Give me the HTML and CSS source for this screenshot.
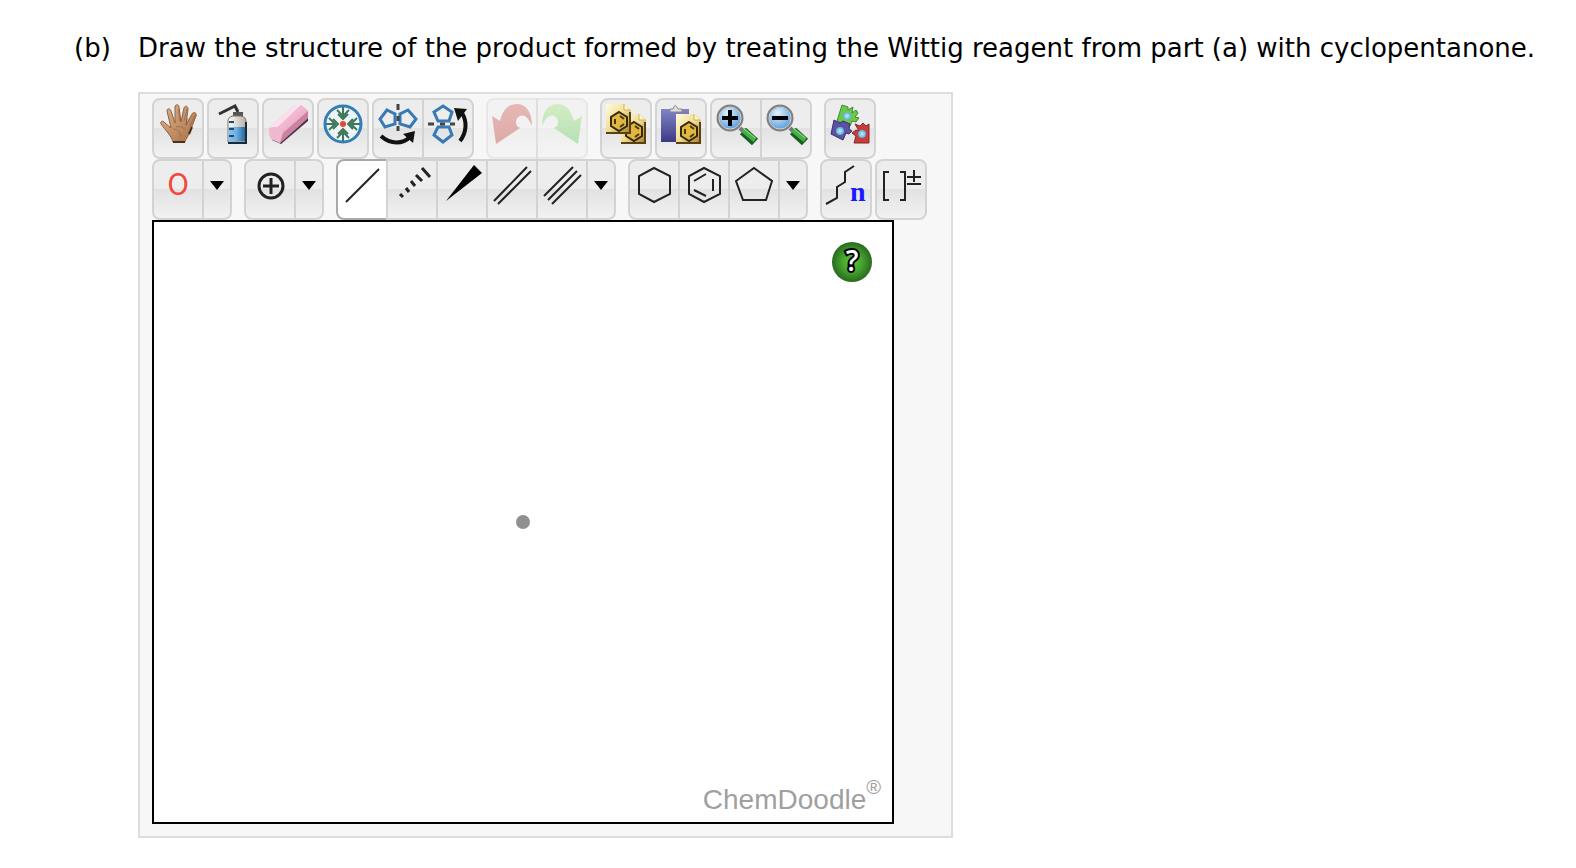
FILE: index.html
```
<!DOCTYPE html>
<html lang="en">
<head>
  <meta charset="UTF-8">
  <title>Wittig reaction - part (b)</title>
  <link rel="stylesheet" href="styles.css">
</head>

<body>
  <!-- icons that are used more than once -->
  <svg class="defs" aria-hidden="true">
    <defs>
      <linearGradient id="skin" x1="0" y1="0" x2="1" y2="1"><stop offset="0" stop-color="#dfb48c"/><stop offset="1" stop-color="#a96f45"/></linearGradient>
      <linearGradient id="liquid" x1="0" y1="0" x2="1" y2="0"><stop offset="0" stop-color="#8fc4ea"/><stop offset="0.45" stop-color="#6cb2e6"/><stop offset="1" stop-color="#245f96"/></linearGradient>
      <linearGradient id="plastic" x1="0" y1="0" x2="1" y2="0"><stop offset="0" stop-color="#fffdf8"/><stop offset="1" stop-color="#b8b0a8"/></linearGradient>
      <linearGradient id="pink" x1="0" y1="0" x2="1" y2="1"><stop offset="0" stop-color="#fbd0e2"/><stop offset="1" stop-color="#e69abb"/></linearGradient>
      <linearGradient id="red" x1="0" y1="0" x2="0" y2="1"><stop offset="0" stop-color="#cf5a50"/><stop offset="1" stop-color="#b83b32"/></linearGradient>
      <linearGradient id="green" x1="0" y1="0" x2="0" y2="1"><stop offset="0" stop-color="#a0e078"/><stop offset="1" stop-color="#55c055"/></linearGradient>
      <linearGradient id="paper" x1="0" y1="0" x2="1" y2="1"><stop offset="0" stop-color="#fffbe0"/><stop offset="0.5" stop-color="#f0dc90"/><stop offset="1" stop-color="#a07820"/></linearGradient>
      <linearGradient id="board" x1="0" y1="0" x2="0" y2="1"><stop offset="0" stop-color="#8384c6"/><stop offset="1" stop-color="#3c3a86"/></linearGradient>
      <radialGradient id="lens" cx="0.4" cy="0.3" r="0.8"><stop offset="0" stop-color="#e4f2fc"/><stop offset="1" stop-color="#3f92dc"/></radialGradient>
      <radialGradient id="atom"><stop offset="0" stop-color="#c8eefa"/><stop offset="1" stop-color="#5aaed8"/></radialGradient>
      <radialGradient id="help"><stop offset="0" stop-color="#5ccb3a"/><stop offset="0.5" stop-color="#46a42e"/><stop offset="1" stop-color="#286a1e"/></radialGradient>
      <g id="page">
        <path d="M0 0h19l6 6v24H0z" fill="url(#paper)"/>
        <path d="M0 29h24V8" fill="none" stroke="#5a410f" stroke-width="2"/>
        <path d="M18 0v6h6" fill="#fff6cc" stroke="#c9b26c"/>
        <path d="M13 8l8 5v9l-8 5-8-5v-9z" fill="#e0b83f" stroke="#332810" stroke-width="2"/>
        <path d="M9 15v5M14 12l4 3M14 23l4-3" fill="none" stroke="#4a3510" stroke-width="2"/>
      </g>
      <g id="glass">
        <path d="M24 24l4 4" stroke="#777" stroke-width="4"/>
        <path d="M27 27l12 11" stroke="#1b5c20" stroke-width="9"/>
        <path d="M27 26l12 10" stroke="#48ae48" stroke-width="5"/>
        <path d="M28 25l11 9" stroke="#97dd91"/>
        <circle cx="14" cy="14" r="12" fill="url(#lens)" stroke="#808080" stroke-width="3"/>
        <circle cx="14" cy="14" r="11" fill="none" stroke="#c5d6e4"/>
      </g>
      <g id="inward">
        <path d="M20 3v10M14 6l6 6 6-6M15 10l5 5 5-5" fill="none" stroke="#3f785a" stroke-width="2"/>
      </g>
    </defs>
  </svg>

  <main class="question">
    <span class="part">(b)</span>
    <div class="content">
      <p class="prompt">Draw the structure of the product formed by treating the Wittig reagent from part (a) with cyclopentanone.</p>

      <div class="sketcher">
        <!-- Editing tools -->
        <div class="toolbar">
          <div class="tools">
            <button class="tool" aria-label="Move"><svg viewBox="0 0 40 40">
              <path d="M15 38C13 31 8 27 3 20c-1-3 2-4 4-1l6 5L9 7c0-3 3-3 4 0l4 12V3c0-3 4-3 4 0l2 15 3-14c1-3 4-2 4 1l-2 16 6-11c2-3 5-1 4 2l-5 13c-2 7-5 9-6 13z" fill="url(#skin)" stroke="#8d6242"/>
              <path d="M15 25c5 0 7 3 8 8M18 23c5-1 7 0 9 3M28 21l2-7M32 22l5-11M20 5l2 12M29 5l-3 12" fill="none" stroke="#805636" opacity="0.5"/>
              <path d="M15 38h12M31 30l3-7" stroke="#4c301c" stroke-width="2"/>
            </svg></button>
            <button class="tool" aria-label="Clear"><svg viewBox="0 0 40 40">
              <path d="M6 10L22 2l3 6" fill="none" stroke="#333" stroke-width="3"/>
              <path d="M20 8h10v4H20z" fill="#555"/>
              <path d="M15 38V17q0-4 5-5h8q5 1 5 5v21z" fill="url(#plastic)" stroke="#77706a"/>
              <path d="M15 23h18v14H15z" fill="url(#liquid)"/>
              <path d="M15 39h18V18" fill="none" stroke="#152c40" stroke-width="2"/>
              <path d="M16 18h5M16 25h5M16 32h5" stroke="#284861" stroke-width="2"/>
            </svg></button>
            <button class="tool" aria-label="Erase"><svg viewBox="0 0 40 40">
              <path d="M4 36l9 4L40 17V9z" fill="#493542"/>
              <path d="M1 24L27 1h6l7 6v7L12 39l-9-4-2-6z" fill="#e9a3c3"/>
              <path d="M1 24L27 1h6L10 23z" fill="#fce1ec"/>
              <path d="M10 23L33 1l7 6-25 22z" fill="url(#pink)"/>
              <path d="M1 24l9-1 5 6-3 10-9-4-2-6z" fill="#f1b9d1"/>
              <path d="M15 29l25-22v7L12 39z" fill="#cc80a2"/>
            </svg></button>
            <button class="tool" aria-label="Center"><svg viewBox="0 0 40 40">
              <circle cx="20" cy="20" r="18" fill="#eef5f8" stroke="#347eb6" stroke-width="3"/>
              <use href="#inward"/>
              <use href="#inward" transform="rotate(90 20 20)"/>
              <use href="#inward" transform="rotate(180 20 20)"/>
              <use href="#inward" transform="rotate(270 20 20)"/>
              <circle cx="20" cy="20" r="3" fill="#e8443a"/>
            </svg></button>
            <div class="group">
              <button class="tool" aria-label="Flip horizontally"><svg viewBox="0 0 40 40">
                <path d="M9 6l8 4v10L7 23l-5-8zM30 6l-8 4v10l10 3 6-8z" fill="none" stroke="#377ab5" stroke-width="3"/>
                <path d="M20 0v6M20 12v5M20 22v5" stroke="#444" stroke-width="3"/>
                <path d="M3 32c10 9 22 8 29 1" fill="none" stroke="#111" stroke-width="4"/>
                <path d="M37 27l-2 12-10-9z" fill="#111"/>
              </svg></button>
              <button class="tool" aria-label="Flip vertically"><svg viewBox="0 0 40 40">
                <path d="M15 2l9 6-3 9H10L6 8zM10 23h11l3 8-9 7-9-7z" fill="none" stroke="#377ab5" stroke-width="3"/>
                <path d="M0 20h6M12 20h5M22 20h5" stroke="#444" stroke-width="3"/>
                <path d="M32 37c7-9 7-20 2-28" fill="none" stroke="#111" stroke-width="4"/>
                <path d="M26 4l13 1-9 12z" fill="#111"/>
              </svg></button>
            </div>
          </div>
          <div class="group">
            <button class="tool" aria-label="Undo" disabled><svg viewBox="0 0 40 40">
              <path d="M0 12l8 5C11 5 17 0 25 0c9 0 15 8 15 22-3-7-7-12-12-10-4 2-5 6-3 10l3 2L4 40z" fill="url(#red)"/>
            </svg></button>
            <button class="tool" aria-label="Redo" disabled><svg viewBox="0 0 40 40">
              <path d="M40 12l-8 5C29 5 23 0 15 0 6 0 0 8 0 22c3-7 7-12 12-10 4 2 5 6 3 10l-3 2 24 16z" fill="url(#green)"/>
            </svg></button>
          </div>
          <div class="tools">
            <button class="tool" aria-label="Copy"><svg viewBox="0 0 40 40">
              <use href="#page" x="15" y="10"/>
              <use href="#page"/>
            </svg></button>
            <button class="tool" aria-label="Paste"><svg viewBox="0 0 40 40">
              <path d="M0 5h28v33H0z" fill="url(#board)"/>
              <path d="M9 8V5h3q2-7 5 0h4v3z" fill="#ddd" stroke="#888"/>
              <use href="#page" x="15" y="10"/>
            </svg></button>
            <div class="group">
              <button class="tool" aria-label="Zoom in"><svg viewBox="0 0 40 40">
                <use href="#glass"/>
                <path d="M14 6v16M6 14h16" stroke="#000" stroke-width="4"/>
              </svg></button>
              <button class="tool" aria-label="Zoom out"><svg viewBox="0 0 40 40">
                <use href="#glass"/>
                <path d="M6 14h16" stroke="#000" stroke-width="4"/>
              </svg></button>
            </div>
          </div>
          <button class="tool" aria-label="Templates"><svg viewBox="0 0 40 40">
            <path d="M12 1l6 2v3l5-3-1 6 4-3 2 3-3 4 4 1-3 4-4-1-2 5-7-2-6-3z" fill="#6ac84a" stroke="#3f8a34"/>
            <path d="M4 16l6 3 3-2 7 3-1 5 3 2-3 3-3-1-3 7-12-6z" fill="#5c52a4" stroke="#383070"/>
            <path d="M25 20l5 2 3-3 3 3 3-2v19H24l2-7-4-3 4-3 3 1z" fill="#c53d3c" stroke="#8a2625"/>
            <circle cx="17" cy="12" r="4" fill="url(#atom)"/>
            <circle cx="10" cy="27" r="4" fill="url(#atom)"/>
            <circle cx="32" cy="30" r="4" fill="url(#atom)"/>
          </svg></button>
        </div>

        <!-- Drawing tools -->
        <div class="toolbar">
          <div class="group">
            <button class="tool atom" aria-label="Oxygen">O</button>
            <button class="tool menu" aria-label="More elements"></button>
          </div>
          <div class="group">
            <button class="tool" aria-label="Increase charge"><svg class="line thick" viewBox="0 0 40 40">
              <circle cx="21" cy="21" r="12"/><path d="M21 13v16M13 21h16"/>
            </svg></button>
            <button class="tool menu" aria-label="More attributes"></button>
          </div>
          <div class="group">
            <button class="tool selected" aria-label="Single bond"><svg class="line" viewBox="0 0 40 40"><path d="M4 37L37 4"/></svg></button>
            <button class="tool" aria-label="Recessed bond"><svg class="line thick" viewBox="0 0 40 40"><path d="M30 3l8 9M24 10l6 6M19 16l4 5M14 23l3 4M8 29l3 3"/></svg></button>
            <button class="tool" aria-label="Protruding bond"><svg viewBox="0 0 40 40"><path d="M4 36L32 0l8 8z"/></svg></button>
            <button class="tool" aria-label="Double bond"><svg class="line" viewBox="0 0 40 40"><path d="M2 36L35 2M6 39L39 6"/></svg></button>
            <button class="tool" aria-label="Triple bond"><svg class="line" viewBox="0 0 40 40"><path d="M2 31L31 2M6 35L35 6M10 39l29-29"/></svg></button>
            <button class="tool menu" aria-label="More bonds"></button>
          </div>
          <div class="group">
            <button class="tool" aria-label="Cyclohexane ring"><svg class="line" viewBox="0 0 40 40"><path d="M20 3l16 8v18l-16 8-15-8V11z"/></svg></button>
            <button class="tool" aria-label="Benzene ring"><svg class="line" viewBox="0 0 40 40"><path d="M20 3l16 8v18l-16 8-15-8V11zM10 16l12-7M10 25l12 6M29 14v12"/></svg></button>
            <button class="tool" aria-label="Cyclopentane ring"><svg class="line" viewBox="0 0 40 40"><path d="M20 3l18 13-6 19H9L2 16z"/></svg></button>
            <button class="tool menu" aria-label="More rings"></button>
          </div>
          <div class="tools">
            <button class="tool" aria-label="Repeating group"><svg class="line" viewBox="0 0 40 40">
              <path d="M0 39l11-6V22l8-5V7l9-6"/><text class="repeat" x="24" y="36">n</text>
            </svg></button>
            <button class="tool" aria-label="Bracket and charge"><svg class="line" viewBox="0 0 40 40">
              <path d="M8 7H3v28h5M19 7h5v28h-5M33 5v12M26 12h14M26 19h14"/>
            </svg></button>
          </div>
        </div>

        <div class="canvas">
          <button class="help" aria-label="Help"><svg viewBox="0 0 40 40">
            <circle cx="20" cy="20" r="20" fill="url(#help)"/>
            <text x="20" y="29">?</text>
          </svg></button>
          <span class="dot"></span>
          <span class="brand">ChemDoodle<sup>®</sup></span>
        </div>
      </div>
    </div>
  </main>
</body>
</html>
```

FILE: styles.css
```
* {
  box-sizing: border-box;
}

body {
  margin: 0;
  background: #fff;
  color: #000;
  font-family: Verdana, "DejaVu Sans", sans-serif;
  font-size: 26px;
  line-height: 32px;
}

.defs {
  position: absolute;
  width: 0;
  height: 0;
}

.question {
  display: grid;
  grid-template-columns: 64px 1fr;
  padding: 32px 24px 30px 74px;
}

.prompt {
  margin: 0 0 28px;
}

/* Sketcher */
.sketcher {
  max-width: 815px;
  padding: 4px 12px 12px;
  border: 2px solid #ddd;
  background: #f7f7f7;
}

.toolbar {
  display: flex;
  flex-wrap: wrap;
  gap: 12px;
}

.tools {
  display: flex;
  gap: 3px;
}

.group {
  display: flex;
}

.tool {
  width: 52px;
  height: 61px;
  padding: 4px 4px 13px;
  border: 2px solid #d3d3d3;
  border-radius: 8px;
  background: linear-gradient(#ededed 50%, #e2e2e2 50%, #f2f2f2);
}

.tool svg {
  display: block;
  width: 40px;
  height: 40px;
  overflow: visible;
}

/* buttons in a group share their borders */
.group .tool {
  border-radius: 0;
}
.group .tool + .tool {
  margin-left: -2px;
}
.group .tool:first-child {
  border-radius: 8px 0 0 8px;
}
.group .tool:last-child {
  border-radius: 0 8px 8px 0;
}

.tool:disabled {
  opacity: 0.4;
}

.group .selected {
  border-color: #aaa;
  border-right-color: #d3d3d3;
  background: #fff;
}

.group .menu {
  width: 30px;
  padding: 0 6px 9px;
}
.menu::before {
  content: "";
  display: block;
  border: 7px solid transparent;
  border-top: 9px solid #000;
  border-bottom: 0;
}

.group .atom {
  padding: 0 0 11px;
  color: #f4473c;
  font: 30px "DejaVu Sans Condensed", "Liberation Sans Narrow", "Open Sans", sans-serif;
}

.line {
  fill: none;
  stroke: #222;
  stroke-width: 2;
}
.thick {
  stroke-width: 3;
}
.repeat {
  fill: #1a1aff;
  stroke: none;
  font: bold 28px "Liberation Serif", serif;
}

/* Drawing area */
.canvas {
  position: relative;
  max-width: 742px;
  height: 604px;
  border: 2px solid #000;
  background: #fff;
}

.help {
  position: absolute;
  top: 20px;
  right: 20px;
  padding: 0;
  border: 0;
  border-radius: 50%;
  background: none;
}
.help svg {
  display: block;
  width: 40px;
  height: 40px;
}
.help text {
  fill: #fff;
  stroke: #000;
  stroke-width: 4;
  paint-order: stroke;
  text-anchor: middle;
  font: 600 28px "Open Sans", sans-serif;
}

.dot {
  position: absolute;
  top: 50%;
  left: 50%;
  width: 14px;
  height: 14px;
  margin: -7px;
  border-radius: 50%;
  background: #909090;
}

.brand {
  position: absolute;
  right: 11px;
  bottom: 6px;
  color: #a0a0a0;
  font: 28px/32px "Liberation Sans", sans-serif;
}
.brand sup {
  font-size: 20px;
  line-height: 0;
  vertical-align: 15px;
}
```
